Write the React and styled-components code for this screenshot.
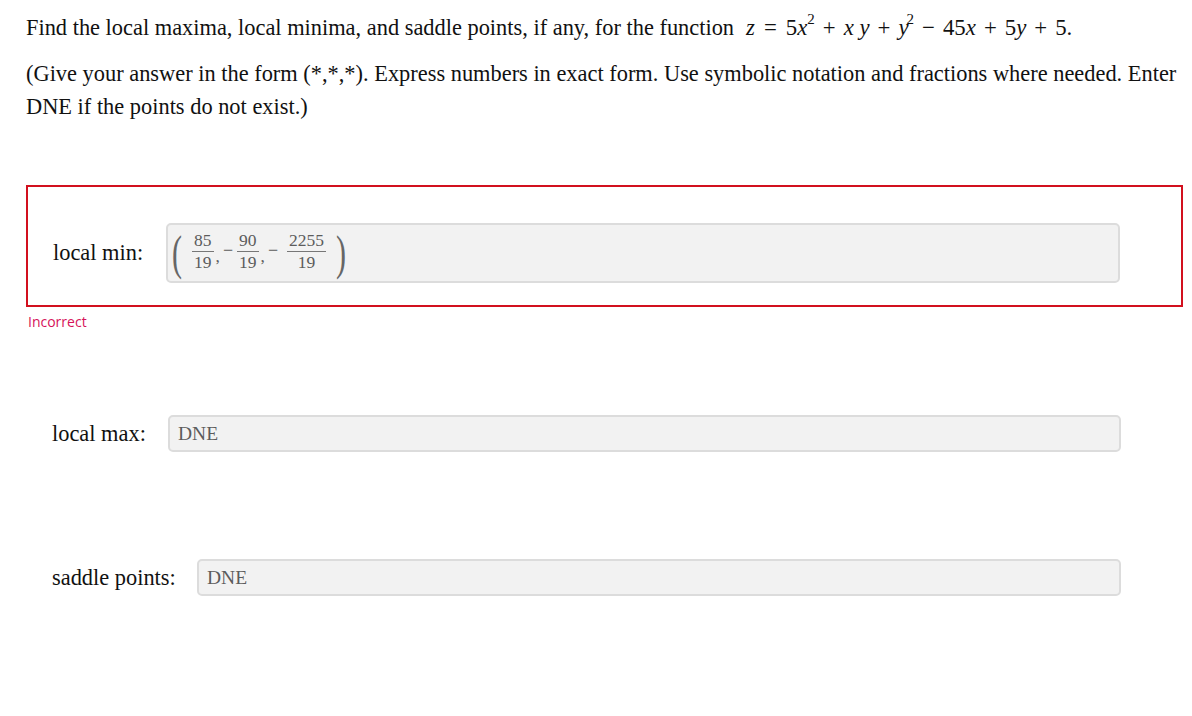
import React from "react";
import styled, { createGlobalStyle } from "styled-components";

const GlobalStyle = createGlobalStyle`
  html, body {
    margin: 0;
    padding: 0;
    background: #fff;
  }
  body {
    font-family: "Liberation Serif", "Times New Roman", serif;
    color: #111;
  }
`;

const Page = styled.div`
  width: 1192px;
  min-height: 716px;
  padding: 11px 9px 0 26px;
  box-sizing: border-box;
`;

const Question = styled.p`
  margin: 0;
  font-size: 22.4px;
  line-height: 33px;
  margin-bottom: ${(props) => props.gap || "0"};
`;

const Math = styled.span`
  margin-left: 12px;
  font-family: "Liberation Serif", serif;
  font-size: 22.8px;
`;

const Var = styled.i`
  font-style: italic;
`;

const Op = styled.span`
  padding: 0 ${(props) => props.sp || "8px"};
`;

const Sup = styled.sup`
  font-size: 15px;
  line-height: 0;
  position: relative;
  top: -2px;
  margin-left: ${(props) => props.shift || "0"};
`;

const ErrorBox = styled.div`
  margin-top: 62px;
  border: 2px solid #d2101e;
  height: 122px;
  box-sizing: border-box;
  padding: 36px 61px 0 25px;
`;

const Row = styled.div`
  display: flex;
  align-items: center;
  padding-left: ${(props) => props.pad || "26px"};
  padding-right: ${(props) => props.pr || "62px"};
  margin-top: ${(props) => props.top || "0"};
`;

const Label = styled.span`
  font-size: 22.4px;
  width: ${(props) => props.w};
  flex: none;
`;

const Field = styled.div`
  flex: 1;
  height: ${(props) => props.h || "37px"};
  box-sizing: border-box;
  border: 2px solid #dcdcdc;
  border-radius: 5px;
  background: #f2f2f2;
  display: flex;
  align-items: center;
  padding-left: ${(props) => props.pl || "8px"};
  font-size: 19.5px;
  color: #5c5c5c;
`;

const Paren = styled.span`
  display: inline-block;
  font-size: 30px;
  color: #666;
  transform: scaleY(1.6);
  margin: ${(props) => props.m};
  line-height: 1;
`;

const Frac = styled.span`
  display: inline-flex;
  flex-direction: column;
  align-items: center;
  font-size: 17.5px;
  line-height: 17px;
  color: #5c5c5c;
  margin: 0 2px 4px;
`;

const Num = styled.span`
  padding: 0 2px 2px;
  border-bottom: 1px solid #777;
  align-self: stretch;
  text-align: center;
`;

const Den = styled.span`
  padding-top: 2px;
`;

const Comma = styled.span`
  font-size: 17.5px;
  color: #5c5c5c;
  margin: 6px 0 0;
`;

const Minus = styled.span`
  font-size: 18px;
  color: #5c5c5c;
  margin: 0 ${(props) => props.r || "2px"} 5px 3px;
`;

const Incorrect = styled.div`
  font-family: "Open Sans", "Liberation Sans", sans-serif;
  font-size: 14px;
  color: #d6135a;
  margin: 5px 0 0 2px;
`;

function Fraction({ n, d }) {
  return (
    <Frac>
      <Num>{n}</Num>
      <Den>{d}</Den>
    </Frac>
  );
}

export default function App() {
  return (
    <>
      <GlobalStyle />
      <Page>
        <Question gap="13px">
          Find the local maxima, local minima, and saddle points, if any, for the function
          <Math>
            <Var>z</Var>
            <Op sp="9px">=</Op>5<Var>x</Var>
            <Sup>2</Sup>
            <Op>+</Op>
            <Var>x y</Var>
            <Op>+</Op>
            <Var>y</Var>
            <Sup shift="-2px">2</Sup>
            <Op>−</Op>45<Var>x</Var>
            <Op>+</Op>5<Var>y</Var>
            <Op>+</Op>5.
          </Math>
        </Question>
        <Question>
          (Give your answer in the form (*,*,*). Express numbers in exact form. Use symbolic notation and fractions where needed. Enter DNE if the points do not exist.)
        </Question>

        <ErrorBox>
          <Row pad="0" pr="0">
            <Label w="113px">local min:</Label>
            <Field h="60px" pl="4px">
              <Paren m="0 8px 0 0">(</Paren>
              <Fraction n="85" d="19" />
              <Comma>,</Comma>
              <Minus>−</Minus>
              <Fraction n="90" d="19" />
              <Comma>,</Comma>
              <Minus r="7px">−</Minus>
              <Fraction n="2255" d="19" />
              <Paren m="0 0 0 8px">)</Paren>
            </Field>
          </Row>
        </ErrorBox>
        <Incorrect>Incorrect</Incorrect>

        <Row top="84px">
          <Label w="116px">local max:</Label>
          <Field>DNE</Field>
        </Row>

        <Row top="107px">
          <Label w="145px">saddle points:</Label>
          <Field>DNE</Field>
        </Row>
      </Page>
    </>
  );
}
